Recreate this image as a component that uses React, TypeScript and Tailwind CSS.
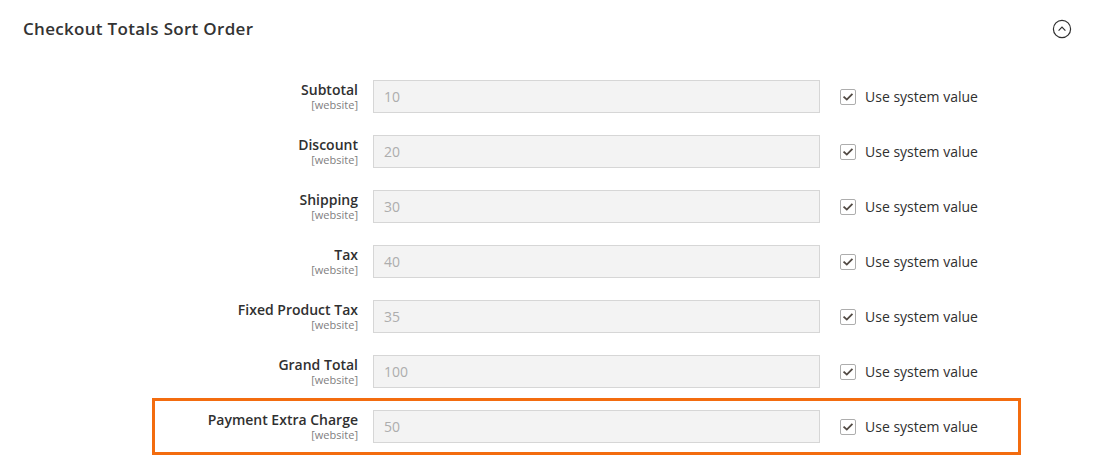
import React from "react";

const rows = [
  { label: "Subtotal", value: "10" },
  { label: "Discount", value: "20" },
  { label: "Shipping", value: "30" },
  { label: "Tax", value: "40" },
  { label: "Fixed Product Tax", value: "35" },
  { label: "Grand Total", value: "100" },
  { label: "Payment Extra Charge", value: "50", highlight: true },
];

function Check() {
  return (
    <span className="flex h-[16px] w-[16px] items-center justify-center rounded-[2px] border border-[#adadad] bg-white">
      <svg width="12" height="12" viewBox="0 0 12 12" fill="none">
        <path d="M2.2 6.2 L4.8 8.6 L9.8 3.4" stroke="#514943" strokeWidth="1.8" strokeLinecap="square" />
      </svg>
    </span>
  );
}

export default function App() {
  return (
    <div className="w-[1096px] h-[465px] bg-white text-[#303030] overflow-hidden" style={{ fontFamily: '"Open Sans", sans-serif' }}>
      <div className="flex h-[57px] items-center justify-between pl-[23px] pr-[24px]">
        <h2 className="text-[17px] font-semibold tracking-[0.3px] text-[#333333]">Checkout Totals Sort Order</h2>
        <svg width="20" height="20" viewBox="0 0 20 20" fill="none">
          <circle cx="10" cy="10" r="8.6" stroke="#303030" strokeWidth="1.2" />
          <path d="M6.6 11.6 L10 8.2 L13.4 11.6" stroke="#303030" strokeWidth="1.2" />
        </svg>
      </div>
      <div className="flex flex-col pt-[12px]">
        {rows.map((r) => (
          <div
            key={r.label}
            className={
              r.highlight
                ? "ml-[152px] -my-px flex w-[869px] items-start border-[3px] border-[#f36c0f] py-[9px]"
                : "ml-[152px] flex w-[869px] items-start border-[3px] border-transparent py-[8px]"
            }
          >
            <div className="flex w-[203px] flex-col items-end pt-px">
              <span className="text-[14px] font-semibold leading-[18px] text-[#303030]">{r.label}</span>
              <span className="text-[11px] leading-[11px] text-[#808080]">[website]</span>
            </div>
            <div className="ml-[15px] flex h-[33px] w-[447px] items-center border border-[#d6d6d6] bg-[#f3f3f3] pl-[10px] text-[14px] text-[#adadad]">
              {r.value}
            </div>
            <div className="ml-[20px] flex h-[33px] items-center gap-[9px]">
              <Check />
              <span className="text-[14px] text-[#303030]">Use system value</span>
            </div>
          </div>
        ))}
      </div>
    </div>
  );
}
